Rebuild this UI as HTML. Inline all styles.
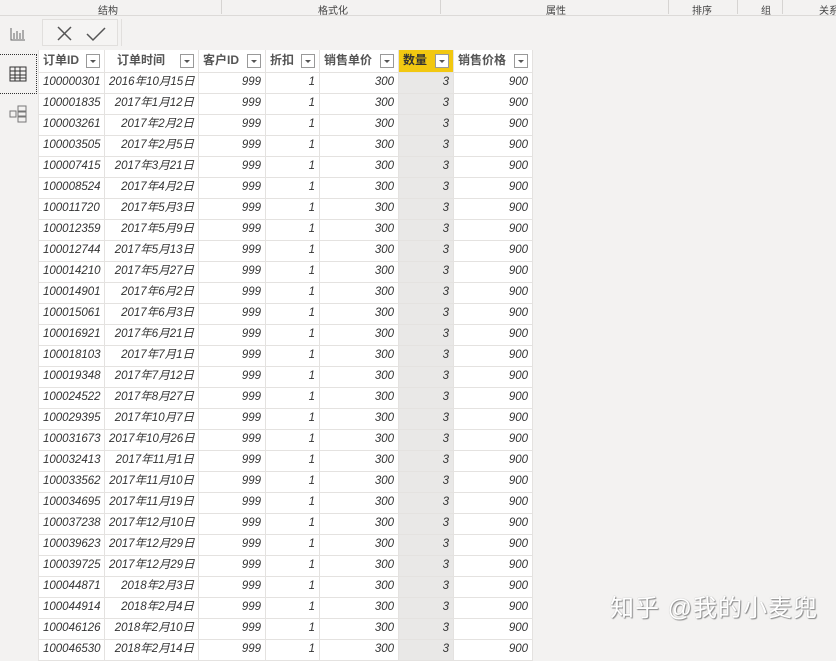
<!DOCTYPE html>
<html><head><meta charset="utf-8"><style>
*{margin:0;padding:0;box-sizing:border-box}
body{width:836px;height:639px;overflow:hidden;background:#f3f2f1;font-family:"Liberation Sans","Noto Sans CJK SC",sans-serif;position:relative}
.top{position:absolute;left:0;top:0;width:836px;height:16px;border-bottom:1px solid #dcdad8;font-size:10px;color:#444;overflow:hidden}
.top span{position:absolute;top:2px;white-space:nowrap}
.top i{position:absolute;top:0;height:14px;border-left:1px solid #d6d4d2}
.tb{position:absolute;left:42px;top:19px;width:76px;height:27px;border:1px solid #e1dfdd;background:#f5f4f3}
.tb2{position:absolute;left:121px;top:19px;width:715px;height:27px;border-left:1px solid #e1dfdd}
.side .sel{position:absolute;left:0;top:54px;width:37px;height:40px;border:1px dotted #333;border-left:none}
table{position:absolute;left:38px;top:50px;border-collapse:collapse;background:#fff;font-size:11.5px;table-layout:fixed;width:494px}
td,th{border:1px solid #e4e2e0;height:21px;padding:0 4px;white-space:nowrap;overflow:hidden;line-height:19px;vertical-align:middle}
th{text-align:left;font-weight:bold;color:#555;font-size:12px;position:relative;height:22px;border-top:none}
th b{position:absolute;right:4px;top:4px;width:14px;height:14px;border:1px solid #999;background:#fff}
th b:after{content:"";position:absolute;left:3px;top:5px;border-left:3px solid transparent;border-right:3px solid transparent;border-top:3px solid #555}
td{font-style:italic;text-align:right;color:#333}
td:first-child{text-align:left}
td.q{background:#e9e8e7}
th.q{background:#f2c811;color:#333}
.wm{position:absolute;left:610px;top:588px;font-size:24px;color:#fff;text-shadow:1px 1px 1px #888,0 0 1px #aaa;letter-spacing:1px}
</style></head><body>
<div class="top">
<span style="left:98px">结构</span><i style="left:221px"></i>
<span style="left:318px">格式化</span><i style="left:440px"></i>
<span style="left:546px">属性</span><i style="left:668px"></i>
<span style="left:692px">排序</span><i style="left:737px"></i>
<span style="left:761px">组</span><i style="left:782px"></i>
<span style="left:819px">关系</span>
</div>
<div class="tb"><svg width="76" height="27"><path d="M15 7 L28 20 M28 7 L15 20" stroke="#555" stroke-width="1.5" fill="none"/><path d="M44 14 L50 20 L62 8" stroke="#555" stroke-width="1.5" fill="none"/></svg></div>
<div class="tb2"></div>
<div class="side">
<svg style="position:absolute;left:10px;top:27px" width="16" height="14"><path d="M1 1 V13 H15 M4 6v6M7 4v8M10 6v6M13 3v9" stroke="#666" stroke-width="1" fill="none"/></svg>
<div class="sel"></div>
<svg style="position:absolute;left:9px;top:66px" width="18" height="16"><rect x="1" y="1" width="16" height="14" fill="none" stroke="#333"/><path d="M1 5H17M1 9H17M1 12H17M6 1V15M11 1V15" stroke="#333"/></svg>
<svg style="position:absolute;left:9px;top:105px" width="18" height="18"><rect x="1" y="6" width="6" height="6" fill="none" stroke="#777"/><rect x="9" y="1" width="8" height="5" fill="none" stroke="#777"/><rect x="9" y="7" width="8" height="4" fill="none" stroke="#777"/><rect x="9" y="12" width="8" height="5" fill="none" stroke="#777"/></svg>
</div>
<table>
<colgroup><col style="width:66px"><col style="width:94px"><col style="width:67px"><col style="width:54px"><col style="width:79px"><col style="width:55px"><col style="width:79px"></colgroup>
<tr><th>订单ID<b></b></th><th style="padding-left:12px">订单时间<b></b></th><th>客户ID<b></b></th><th>折扣<b></b></th><th>销售单价<b></b></th><th class="q">数量<b></b></th><th>销售价格<b></b></th></tr>
<tr><td>100000301</td><td>2016年10月15日</td><td>999</td><td>1</td><td>300</td><td class="q">3</td><td>900</td></tr>
<tr><td>100001835</td><td>2017年1月12日</td><td>999</td><td>1</td><td>300</td><td class="q">3</td><td>900</td></tr>
<tr><td>100003261</td><td>2017年2月2日</td><td>999</td><td>1</td><td>300</td><td class="q">3</td><td>900</td></tr>
<tr><td>100003505</td><td>2017年2月5日</td><td>999</td><td>1</td><td>300</td><td class="q">3</td><td>900</td></tr>
<tr><td>100007415</td><td>2017年3月21日</td><td>999</td><td>1</td><td>300</td><td class="q">3</td><td>900</td></tr>
<tr><td>100008524</td><td>2017年4月2日</td><td>999</td><td>1</td><td>300</td><td class="q">3</td><td>900</td></tr>
<tr><td>100011720</td><td>2017年5月3日</td><td>999</td><td>1</td><td>300</td><td class="q">3</td><td>900</td></tr>
<tr><td>100012359</td><td>2017年5月9日</td><td>999</td><td>1</td><td>300</td><td class="q">3</td><td>900</td></tr>
<tr><td>100012744</td><td>2017年5月13日</td><td>999</td><td>1</td><td>300</td><td class="q">3</td><td>900</td></tr>
<tr><td>100014210</td><td>2017年5月27日</td><td>999</td><td>1</td><td>300</td><td class="q">3</td><td>900</td></tr>
<tr><td>100014901</td><td>2017年6月2日</td><td>999</td><td>1</td><td>300</td><td class="q">3</td><td>900</td></tr>
<tr><td>100015061</td><td>2017年6月3日</td><td>999</td><td>1</td><td>300</td><td class="q">3</td><td>900</td></tr>
<tr><td>100016921</td><td>2017年6月21日</td><td>999</td><td>1</td><td>300</td><td class="q">3</td><td>900</td></tr>
<tr><td>100018103</td><td>2017年7月1日</td><td>999</td><td>1</td><td>300</td><td class="q">3</td><td>900</td></tr>
<tr><td>100019348</td><td>2017年7月12日</td><td>999</td><td>1</td><td>300</td><td class="q">3</td><td>900</td></tr>
<tr><td>100024522</td><td>2017年8月27日</td><td>999</td><td>1</td><td>300</td><td class="q">3</td><td>900</td></tr>
<tr><td>100029395</td><td>2017年10月7日</td><td>999</td><td>1</td><td>300</td><td class="q">3</td><td>900</td></tr>
<tr><td>100031673</td><td>2017年10月26日</td><td>999</td><td>1</td><td>300</td><td class="q">3</td><td>900</td></tr>
<tr><td>100032413</td><td>2017年11月1日</td><td>999</td><td>1</td><td>300</td><td class="q">3</td><td>900</td></tr>
<tr><td>100033562</td><td>2017年11月10日</td><td>999</td><td>1</td><td>300</td><td class="q">3</td><td>900</td></tr>
<tr><td>100034695</td><td>2017年11月19日</td><td>999</td><td>1</td><td>300</td><td class="q">3</td><td>900</td></tr>
<tr><td>100037238</td><td>2017年12月10日</td><td>999</td><td>1</td><td>300</td><td class="q">3</td><td>900</td></tr>
<tr><td>100039623</td><td>2017年12月29日</td><td>999</td><td>1</td><td>300</td><td class="q">3</td><td>900</td></tr>
<tr><td>100039725</td><td>2017年12月29日</td><td>999</td><td>1</td><td>300</td><td class="q">3</td><td>900</td></tr>
<tr><td>100044871</td><td>2018年2月3日</td><td>999</td><td>1</td><td>300</td><td class="q">3</td><td>900</td></tr>
<tr><td>100044914</td><td>2018年2月4日</td><td>999</td><td>1</td><td>300</td><td class="q">3</td><td>900</td></tr>
<tr><td>100046126</td><td>2018年2月10日</td><td>999</td><td>1</td><td>300</td><td class="q">3</td><td>900</td></tr>
<tr><td>100046530</td><td>2018年2月14日</td><td>999</td><td>1</td><td>300</td><td class="q">3</td><td>900</td></tr>
</table>
<div class="wm">知乎 @我的小麦兜</div>
</body></html>
